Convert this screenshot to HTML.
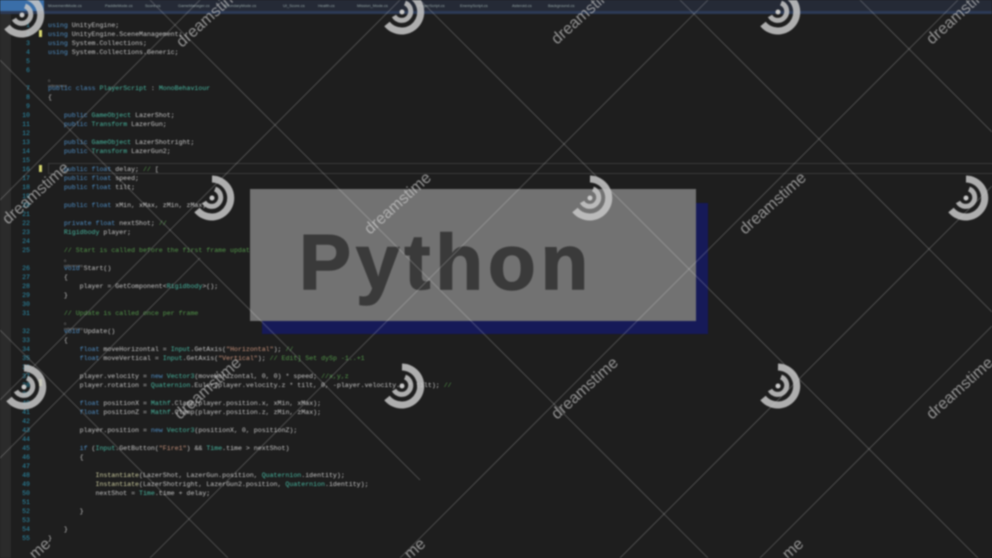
<!DOCTYPE html>
<html><head><meta charset="utf-8"><style>
html,body{margin:0;padding:0;width:992px;height:558px;overflow:hidden;background:#1e1e1e}
#wrap{position:relative;width:992px;height:558px;filter:blur(0.8px)}
#tabs{position:absolute;left:0;top:0;width:992px;height:11px;background:#252a36;font:4px "Liberation Sans",sans-serif;color:#9aa}
#tabs span{position:absolute;top:3px}
#tabbar2{position:absolute;left:0;top:11px;width:992px;height:3px;background:#2c3a55}
#gut{position:absolute;left:0;top:14px;width:11px;height:544px;background:#2b2b2b}
#code{position:absolute;left:0;top:21px;font:6.6px/9px "Liberation Mono",monospace;color:#c8c8c8}
.r{height:9px;position:relative}
.n{position:absolute;left:14px;width:16px;text-align:right;color:#2b91af}
.c{position:absolute;left:48px;white-space:pre}
.cl{height:9px;position:relative}
.cl span{position:absolute;left:64px;font:4px "Liberation Sans",sans-serif;color:#888;top:3px}
.k{color:#4f8fc6}.t{color:#48b8a2}.m{color:#53984a}.s{color:#c9937c}.f{color:#d0d0a2}
#hl{position:absolute;left:48px;top:163px;width:944px;height:9px;border:1px solid #3a3a3a}
.ym{position:absolute;left:39px;width:3px;height:7px;background:#d8d870}
#shadow{position:absolute;left:262px;top:203px;width:446px;height:131px;background:#161a58}
#box{position:absolute;left:250px;top:189px;width:446px;height:132px;background:#727272}
#py{position:absolute;left:299px;top:222px;font:bold 78px/80px "Liberation Sans",sans-serif;letter-spacing:5px;color:#3a3a3a;-webkit-text-stroke:1.5px #3a3a3a}
#wm{position:absolute;left:0;top:0;width:992px;height:558px;pointer-events:none}
</style></head><body><div id="wrap">
<div id="tabs"><span style="left:0;top:0;width:44px;height:11px;background:#3a6ea8"></span>
<span style="left:48px">MovementMode.cs</span><span style="left:105px">PaddleMode.cs</span><span style="left:145px">Score.cs</span><span style="left:178px">GameManager.cs</span><span style="left:224px">BoundaryMode.cs</span><span style="left:283px">UI_Score.cs</span><span style="left:318px">Health.cs</span><span style="left:357px">Mission_Mode.cs</span><span style="left:418px">PlayerScript.cs</span><span style="left:460px">EnemyScript.cs</span><span style="left:512px">Asteroid.cs</span><span style="left:548px">Background.cs</span></div>
<div id="tabbar2"></div>
<div id="gut"></div>
<div id="hl"></div>
<div class="ym" style="top:30px"></div><div class="ym" style="top:165px"></div><div class="ym" style="top:379px"></div>
<div id="code">
<div class="r"><span class="n">1</span><span class="c"><span class="k">using</span> UnityEngine;</span></div>
<div class="r"><span class="n">2</span><span class="c"><span class="k">using</span> UnityEngine.SceneManagement;</span></div>
<div class="r"><span class="n">3</span><span class="c"><span class="k">using</span> System.Collections;</span></div>
<div class="r"><span class="n">4</span><span class="c"><span class="k">using</span> System.Collections.Generic;</span></div>
<div class="r"><span class="n">5</span></div>
<div class="r"><span class="n">6</span></div>
<div class="cl"><span style="left:48px">0 references</span></div>
<div class="r"><span class="n">7</span><span class="c"><span class="k">public class</span> <span class="t">PlayerScript</span> : <span class="t">MonoBehaviour</span></span></div>
<div class="r"><span class="n">8</span><span class="c">{</span></div>
<div class="r"><span class="n">9</span></div>
<div class="r"><span class="n">10</span><span class="c">    <span class="k">public</span> <span class="t">GameObject</span> LazerShot;</span></div>
<div class="r"><span class="n">11</span><span class="c">    <span class="k">public</span> <span class="t">Transform</span> LazerGun;</span></div>
<div class="r"><span class="n">12</span></div>
<div class="r"><span class="n">13</span><span class="c">    <span class="k">public</span> <span class="t">GameObject</span> LazerShotright;</span></div>
<div class="r"><span class="n">14</span><span class="c">    <span class="k">public</span> <span class="t">Transform</span> LazerGun2;</span></div>
<div class="r"><span class="n">15</span></div>
<div class="r"><span class="n">16</span><span class="c">    <span class="k">public float</span> delay; <span class="m">//</span> [</span></div>
<div class="r"><span class="n">17</span><span class="c">    <span class="k">public float</span> speed;</span></div>
<div class="r"><span class="n">18</span><span class="c">    <span class="k">public float</span> tilt;</span></div>
<div class="r"><span class="n">19</span></div>
<div class="r"><span class="n">20</span><span class="c">    <span class="k">public float</span> xMin, xMax, zMin, zMax;</span></div>
<div class="r"><span class="n">21</span></div>
<div class="r"><span class="n">22</span><span class="c">    <span class="k">private float</span> nextShot; <span class="m">//</span></span></div>
<div class="r"><span class="n">23</span><span class="c">    <span class="t">Rigidbody</span> player;</span></div>
<div class="r"><span class="n">24</span></div>
<div class="r"><span class="n">25</span><span class="c">    <span class="m">// Start is called before the first frame update</span></span></div>
<div class="cl"><span>0 references</span></div>
<div class="r"><span class="n">26</span><span class="c">    <span class="k">void</span> Start()</span></div>
<div class="r"><span class="n">27</span><span class="c">    {</span></div>
<div class="r"><span class="n">28</span><span class="c">        player = GetComponent&lt;<span class="t">Rigidbody</span>&gt;();</span></div>
<div class="r"><span class="n">29</span><span class="c">    }</span></div>
<div class="r"><span class="n">30</span></div>
<div class="r"><span class="n">31</span><span class="c">    <span class="m">// Update is called once per frame</span></span></div>
<div class="cl"><span>0 references</span></div>
<div class="r"><span class="n">32</span><span class="c">    <span class="k">void</span> Update()</span></div>
<div class="r"><span class="n">33</span><span class="c">    {</span></div>
<div class="r"><span class="n">34</span><span class="c">        <span class="k">float</span> moveHorizontal = <span class="t">Input</span>.GetAxis(<span class="s">"Horizontal"</span>); <span class="m">//</span></span></div>
<div class="r"><span class="n">35</span><span class="c">        <span class="k">float</span> moveVertical = <span class="t">Input</span>.GetAxis(<span class="s">"Vertical"</span>); <span class="m">// Edit] Set dySp -1..+1</span></span></div>
<div class="r"><span class="n">36</span></div>
<div class="r"><span class="n">37</span><span class="c">        player.velocity = <span class="k">new</span> <span class="t">Vector3</span>(moveHorizontal, 0, 0) * speed; <span class="m">//x,y,z</span></span></div>
<div class="r"><span class="n">38</span><span class="c">        player.rotation = <span class="t">Quaternion</span>.Euler(player.velocity.z * tilt, 0, -player.velocity.x * tilt); <span class="m">//</span></span></div>
<div class="r"><span class="n">39</span></div>
<div class="r"><span class="n">40</span><span class="c">        <span class="k">float</span> positionX = <span class="t">Mathf</span>.Clamp(player.position.x, xMin, xMax);</span></div>
<div class="r"><span class="n">41</span><span class="c">        <span class="k">float</span> positionZ = <span class="t">Mathf</span>.Clamp(player.position.z, zMin, zMax);</span></div>
<div class="r"><span class="n">42</span></div>
<div class="r"><span class="n">43</span><span class="c">        player.position = <span class="k">new</span> <span class="t">Vector3</span>(positionX, 0, positionZ);</span></div>
<div class="r"><span class="n">44</span></div>
<div class="r"><span class="n">45</span><span class="c">        <span class="k">if</span> (<span class="t">Input</span>.GetButton(<span class="s">"Fire1"</span>) &amp;&amp; <span class="t">Time</span>.time &gt; nextShot)</span></div>
<div class="r"><span class="n">46</span><span class="c">        {</span></div>
<div class="r"><span class="n">47</span></div>
<div class="r"><span class="n">48</span><span class="c">            <span class="f">Instantiate</span>(LazerShot, LazerGun.position, <span class="t">Quaternion</span>.identity);</span></div>
<div class="r"><span class="n">49</span><span class="c">            <span class="f">Instantiate</span>(LazerShotright, LazerGun2.position, <span class="t">Quaternion</span>.identity);</span></div>
<div class="r"><span class="n">50</span><span class="c">            nextShot = <span class="t">Time</span>.time + delay;</span></div>
<div class="r"><span class="n">51</span></div>
<div class="r"><span class="n">52</span><span class="c">        }</span></div>
<div class="r"><span class="n">53</span></div>
<div class="r"><span class="n">54</span><span class="c">    }</span></div>
<div class="r"><span class="n">55</span><span class="c">}</span></div>
</div>
<div id="shadow"></div>
<div id="box"></div>
<div id="py">Python</div>
<svg id="wm" width="992" height="558" viewBox="0 0 992 558">
<defs>
<g id="sp" fill="none" stroke="#c8c8c8" stroke-opacity="0.85">
<path d="M0,-19 A19,19 0 1 1 -15,12" stroke-width="7"/>
<path d="M3,-9 A9,9 0 1 1 -8,4" stroke-width="5"/>
<circle r="2.5" fill="#c8c8c8" stroke="none"/>
</g>
</defs>
<g stroke="#ffffff" stroke-opacity="0.25" stroke-width="0.8">
<path d="M-100,300 L300,-100 M0,400 L400,0 M150,558 L708,0 M400,558 L958,0 M620,558 L992,186 M760,558 L992,326 M-100,558 L200,258"/>
<path d="M0,60 L420,480 M150,0 L708,558 M420,0 L978,558 M680,0 L992,312 M0,330 L228,558 M860,0 L992,132"/>
</g>
<use href="#sp" x="22" y="15"/><use href="#sp" x="402" y="12"/><use href="#sp" x="778" y="12"/>
<use href="#sp" x="212" y="198"/><use href="#sp" x="590" y="198"/><use href="#sp" x="966" y="198"/>
<use href="#sp" x="24" y="387"/><use href="#sp" x="402" y="386"/><use href="#sp" x="778" y="386"/>
<g fill="#d0d0d0" fill-opacity="0.65" font-family="Liberation Sans, sans-serif" font-size="16">
<text transform="translate(182,48) rotate(-42)">dreamstime</text>
<text transform="translate(557,45) rotate(-42)">dreamstime</text>
<text transform="translate(932,45) rotate(-42)">dreamstime</text>
<text transform="translate(8,225) rotate(-42)">dreamstime</text>
<text transform="translate(370,235) rotate(-42)">dreamstime</text>
<text transform="translate(745,235) rotate(-42)">dreamstime</text>
<text transform="translate(180,420) rotate(-42)">dreamstime</text>
<text transform="translate(557,420) rotate(-42)">dreamstime</text>
<text transform="translate(932,420) rotate(-42)">dreamstime</text>
<text transform="translate(35,560) rotate(-42)">me</text>
<text transform="translate(410,560) rotate(-42)">me</text>
<text transform="translate(788,560) rotate(-42)">me</text>
</g>
</svg>
</div></body></html>
